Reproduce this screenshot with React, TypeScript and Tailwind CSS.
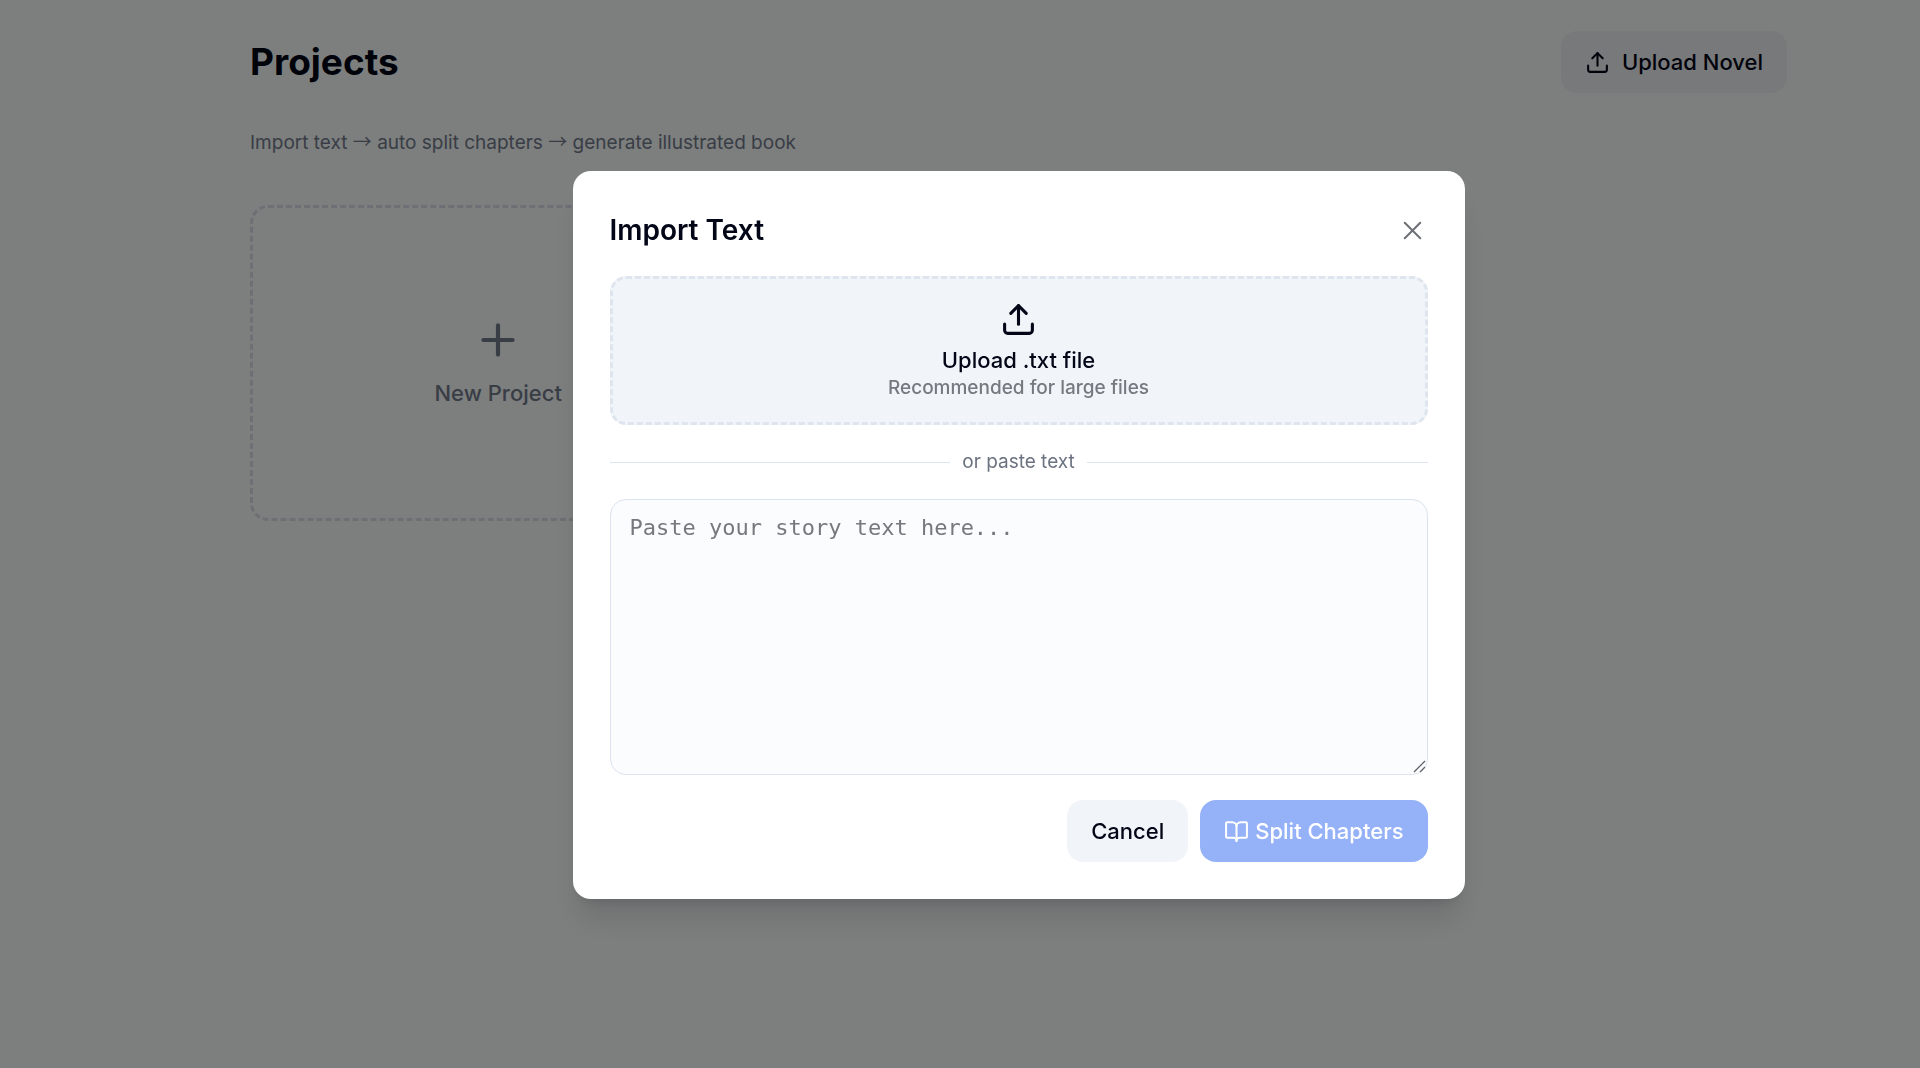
import { BookOpen, Plus, Upload, X } from "lucide-react";

function Arrow() {
  return <span className="font-['Noto_Sans_CJK_SC',sans-serif] leading-none">→</span>;
}

function ProjectsPage() {
  return (
    <main className="mx-auto w-full max-w-[1537px] pt-[31px]">
      <header className="flex items-center justify-between">
        <h1 className="text-[37px] leading-[48px] font-bold text-[#020617]">Projects</h1>
        <button
          type="button"
          className="flex h-[62px] items-center gap-3 rounded-2xl bg-[#f1f2f6] px-6 text-[22px] leading-8 font-medium text-[#020617]"
        >
          <Upload size={25} strokeWidth={2} aria-hidden="true" />
          Upload Novel
        </button>
      </header>
      <p className="mt-8 text-[19px] leading-9 text-[#727a8c]">
        Import text <Arrow /> auto split chapters <Arrow /> generate illustrated book
      </p>
      <section className="mt-11 grid grid-cols-3 gap-6">
        <button
          type="button"
          className="flex h-[316px] flex-col items-center justify-center gap-2.5 rounded-[18px] border-[3px] border-dashed border-[#dcdfe8] text-[22px] leading-9 font-medium text-[#727a8c]"
        >
          <Plus size={50} strokeWidth={2} aria-hidden="true" />
          New Project
        </button>
      </section>
    </main>
  );
}

function ImportDialog() {
  return (
    <div
      role="dialog"
      aria-modal="true"
      aria-labelledby="import-title"
      className="w-full max-w-[892px] rounded-[18px] bg-white p-[37px] shadow-[0_25px_31px_-6px_rgba(2,6,23,0.12),0_10px_12px_-7px_rgba(2,6,23,0.12)]"
    >
      <div className="flex items-center justify-between">
        <h2 id="import-title" className="text-[28px] leading-[44px] font-semibold text-[#020617]">
          Import Text
        </h2>
        <button type="button" aria-label="Close" className="text-[#6b7075]">
          <X size={31} strokeWidth={2} absoluteStrokeWidth aria-hidden="true" />
        </button>
      </div>
      <button
        type="button"
        className="mt-6 flex h-[149px] w-full flex-col items-center justify-center rounded-2xl border-[3px] border-dashed border-[#dfe5ee] bg-[#f1f5f9] pt-0.5 font-medium text-[#020617]"
      >
        <Upload size={37} strokeWidth={2} aria-hidden="true" />
        <span className="mt-2 text-[22px] leading-7">Upload .txt file</span>
        <span className="text-[19px] leading-7 text-[#757a80]">Recommended for large files</span>
      </button>
      <div className="my-5 flex items-center gap-3 text-[19px] leading-[34px] text-[#6b7280]">
        <span className="h-px flex-1 bg-[#dbe3ee]" />
        or paste text
        <span className="h-px flex-1 bg-[#dbe3ee]" />
      </div>
      <div className="relative">
        <textarea
          aria-label="Story text"
          placeholder="Paste your story text here..."
          className="block h-[276px] w-full resize-none rounded-2xl border border-[#dbe3ee] bg-[#fbfcfe] px-[19px] py-3 font-['DejaVu_Sans_Mono',monospace] text-[22px] leading-8 text-[#020617] placeholder:text-[#75787c]"
        />
        <svg
          className="pointer-events-none absolute right-0.5 bottom-0.5"
          width="13"
          height="13"
          viewBox="0 0 13 13"
          fill="none"
          stroke="#5f6368"
          strokeWidth="1.3"
          aria-hidden="true"
        >
          <path d="M1 12 12 1M7 12l5-5" />
        </svg>
      </div>
      <div className="mt-[25px] flex justify-end gap-3 text-[22px] leading-8 font-medium">
        <button type="button" className="h-[62px] rounded-2xl bg-[#f1f5f9] px-6 text-[#020617]">
          Cancel
        </button>
        <button
          type="button"
          disabled
          className="flex h-[62px] items-center gap-1.5 rounded-2xl bg-[#95b1f7] px-6 text-white"
        >
          <BookOpen size={25} strokeWidth={2} absoluteStrokeWidth aria-hidden="true" />
          Split Chapters
        </button>
      </div>
    </div>
  );
}

export default function App() {
  return (
    <div className="min-h-screen bg-[#fafefc] pl-[117px] font-['Inter',sans-serif]">
      <ProjectsPage />
      <div className="fixed inset-0 flex items-center justify-center bg-black/50 pt-0.5 pl-[117px]">
        <ImportDialog />
      </div>
    </div>
  );
}
